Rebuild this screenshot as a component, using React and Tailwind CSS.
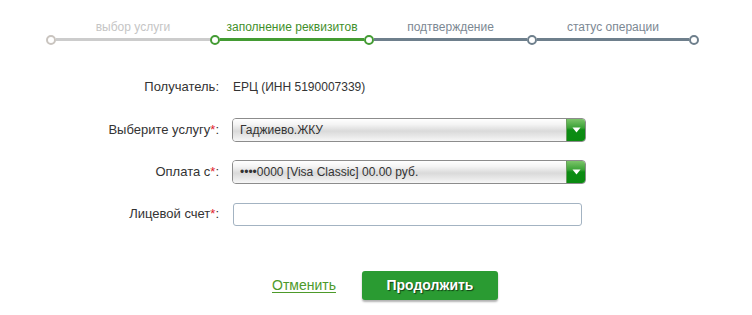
import { useState } from "react";

const steps = [
  { label: "выбор услуги", w: 154, text: "text-[#c5c5c5]", line: "bg-[#cccccc]" },
  { label: "заполнение реквизитов", w: 144, text: "text-[#3f8f2b]", line: "bg-[#439b33]" },
  { label: "подтверждение", w: 153, text: "text-[#7c8893]", line: "bg-[#6e7f8c]" },
  { label: "статус операции", w: 152, text: "text-[#7c8893]", line: "bg-[#6e7f8c]" },
];

const dotColors = ["border-[#c9c4bf]", "border-[#439b33]", "border-[#439b33]", "border-[#6e7f8c]", "border-[#6e7f8c]"];

function Dot({ color }) {
  return <div className={`w-[10px] h-[10px] rounded-full border-2 bg-white shrink-0 ${color}`} />;
}

function Stepper() {
  return (
    <div className="flex items-end pl-[46px] pt-[20px]">
      <Dot color={dotColors[0]} />
      {steps.map((s, i) => (
        <div key={s.label} className="flex items-end">
          <div className="flex flex-col items-center" style={{ width: s.w }}>
            <div className={`text-[12px] leading-[14px] mb-[4px] ${s.text}`}>{s.label}</div>
            <div className={`h-[3px] w-full mb-[3.5px] ${s.line}`} />
          </div>
          <Dot color={dotColors[i + 1]} />
        </div>
      ))}
    </div>
  );
}

function Select({ value }) {
  return (
    <div className="flex h-[24px] w-[354px] rounded-[4px] border border-[#8c8c8c] overflow-hidden shadow-[inset_1px_1px_1px_rgba(0,0,0,0.15)]">
      <div className="flex-1 flex items-center pl-[7px] text-[12px] text-[#333] bg-[linear-gradient(to_bottom,#ffffff_0%,#f4f4f4_25%,#dadada_55%,#e6e6e6_75%,#f7f7f7_100%)]">
        {value}
      </div>
      <div className="w-[19px] flex items-center justify-center border-l border-[#6a9f5e] bg-[linear-gradient(to_bottom,#7cc46a_0%,#3aa236_40%,#0d8c14_50%,#0a8a10_100%)]">
        <svg width="9" height="6" viewBox="0 0 9 6">
          <path d="M0.5 0.5 L8.5 0.5 L4.5 5.5 Z" fill="#ffffff" />
        </svg>
      </div>
    </div>
  );
}

function Row({ label, required, children }) {
  return (
    <div className="flex items-center">
      <div className="w-[220px] text-right text-[13px] text-[#333] pr-[1px]">
        {label}
        {required && <span className="text-[#e0242b]">*</span>}:
      </div>
      <div className="ml-[12px]">{children}</div>
    </div>
  );
}

export default function App() {
  const [account, setAccount] = useState("");

  return (
    <div className="w-[752px] h-[315px] bg-white font-['Liberation_Sans',Arial,sans-serif] overflow-hidden">
      <Stepper />

      <div className="flex flex-col mt-[32px]">
        <div className="flex items-center h-[20px]">
          <div className="w-[220px] text-right text-[13px] text-[#333] pr-[1px]">Получатель:</div>
          <div className="ml-[13px] text-[12px] text-[#333]">ЕРЦ (ИНН 5190007339)</div>
        </div>

        <div className="mt-[21px]">
          <Row label="Выберите услугу" required>
            <Select value="Гаджиево.ЖКУ" />
          </Row>
        </div>

        <div className="mt-[18px]">
          <Row label="Оплата с" required>
            <Select value="••••0000 [Visa Classic] 00.00 руб." />
          </Row>
        </div>

        <div className="mt-[19px]">
          <Row label="Лицевой счет" required>
            <input
              value={account}
              onChange={(e) => setAccount(e.target.value)}
              className="ml-[1px] block w-[349px] h-[23px] rounded-[3px] border border-[#a3b3c2] px-2 text-[13px] outline-none"
            />
          </Row>
        </div>

        <div className="flex items-center mt-[45px] pl-[272px]">
          <a href="#" className="text-[14px] text-[#4d9a2a] underline underline-offset-2">
            Отменить
          </a>
          <button className="ml-[26px] w-[136px] h-[29px] rounded-[3px] bg-[#2a9b32] text-white font-bold text-[14px] shadow-[0_2px_2px_rgba(0,0,0,0.3)] [text-shadow:1px_1px_1px_rgba(0,0,0,0.6)]">
            Продолжить
          </button>
        </div>
      </div>
    </div>
  );
}
